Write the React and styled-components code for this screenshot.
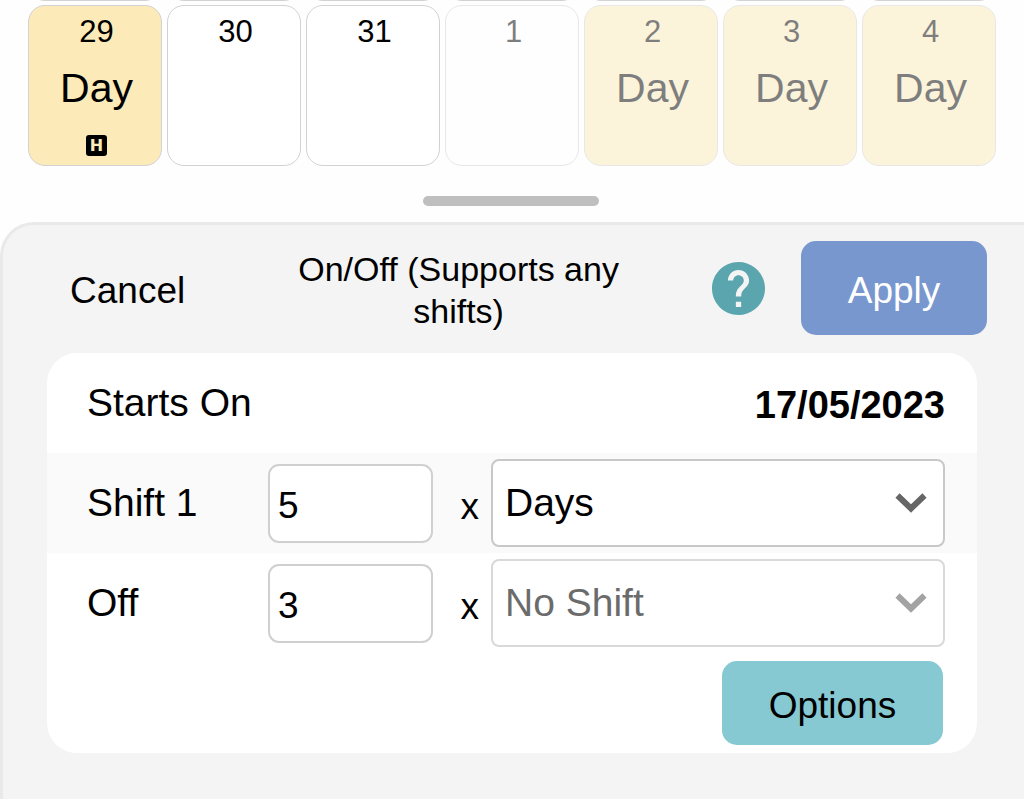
import React, { useState } from 'react'
import styled, { createGlobalStyle } from 'styled-components'
import { MdHelp } from 'react-icons/md'

const days = [
  { date: 29, shift: 'Day', holiday: true },
  { date: 30 },
  { date: 31 },
  { date: 1, next: true },
  { date: 2, shift: 'Day', next: true },
  { date: 3, shift: 'Day', next: true },
  { date: 4, shift: 'Day', next: true },
]

function Chevron() {
  return (
    <ChevronIcon viewBox="0 0 32 20" aria-hidden="true">
      <path d="M2.5 2.5 16 15.5 29.5 2.5" />
    </ChevronIcon>
  )
}

function App() {
  const [shiftDays, setShiftDays] = useState('5')
  const [offDays, setOffDays] = useState('3')

  return (
    <Page>
      <GlobalStyle />
      <Calendar>
        <Week aria-hidden="true">
          {days.map((day) => <DayCell key={day.date} />)}
        </Week>
        <Week>
          {days.map((day) => (
            <DayCell key={day.date} $shift={day.shift} $next={day.next}>
              <DateNumber>{day.date}</DateNumber>
              {day.shift && <ShiftName>{day.shift}</ShiftName>}
              {day.holiday && <Holiday>H</Holiday>}
            </DayCell>
          ))}
        </Week>
      </Calendar>
      <HandleBar>
        <Handle />
      </HandleBar>
      <Panel>
        <Header>
          <CancelButton type="button">Cancel</CancelButton>
          <Title>On/Off (Supports any shifts)</Title>
          <HelpButton type="button" aria-label="Help">
            <MdHelp viewBox="2 2 20 20" size={53} />
          </HelpButton>
          <ApplyButton type="button">Apply</ApplyButton>
        </Header>
        <Card>
          <StartRow>
            <Name>Starts On</Name>
            <StartDate>17/05/2023</StartDate>
          </StartRow>
          <ShiftRow $striped>
            <Label htmlFor="shift-days">Shift 1</Label>
            <CountInput id="shift-days" value={shiftDays} onChange={(e) => setShiftDays(e.target.value)} />
            <Times>x</Times>
            <SelectBox>
              <Select aria-label="Shift 1 type" defaultValue="Days">
                <option>Days</option>
              </Select>
              <Chevron />
            </SelectBox>
          </ShiftRow>
          <ShiftRow>
            <Label htmlFor="off-days">Off</Label>
            <CountInput id="off-days" value={offDays} onChange={(e) => setOffDays(e.target.value)} />
            <Times>x</Times>
            <SelectBox $disabled>
              <Select aria-label="Off type" defaultValue="No Shift" disabled>
                <option>No Shift</option>
              </Select>
              <Chevron />
            </SelectBox>
          </ShiftRow>
          <OptionsRow>
            <OptionsButton type="button">Options</OptionsButton>
          </OptionsRow>
        </Card>
      </Panel>
    </Page>
  )
}

export default App


const GlobalStyle = createGlobalStyle`
  * {
    box-sizing: border-box;
  }
  body {
    margin: 0;
    background: #fefefe;
    color: #000;
    font-family: "Liberation Sans", Arial, sans-serif;
  }
  button, input, select {
    font-family: inherit;
    color: inherit;
  }
  button {
    border: none;
    padding: 0;
    background: none;
    cursor: pointer;
  }
`
const Page = styled.main`
  display: flex;
  flex-direction: column;
  min-height: 100vh;
`
/* only the bottom edge of the previous week stays in view */
const Calendar = styled.section`
  display: flex;
  flex-direction: column;
  justify-content: flex-end;
  gap: 4px;
  height: 166px;
  padding: 0 28px;
  overflow: hidden;
`
const Week = styled.div`
  display: grid;
  grid-template-columns: repeat(7, 1fr);
  grid-auto-rows: 161px;
  flex-shrink: 0;
  gap: 5px;
`
const DayCell = styled.div`
  display: flex;
  flex-direction: column;
  align-items: center;
  padding: 8px 0 0 3px;
  border: 1px solid #d2d2d2;
  border-radius: 17px;
  background: ${(p) => (p.$shift ? '#fcebb8' : '#fff')};
  opacity: ${(p) => (p.$next ? 0.5 : 1)};
`
const DateNumber = styled.span`
  font-size: 31px;
  line-height: 36px;
`
const ShiftName = styled.span`
  margin-top: 14px;
  font-size: 41px;
  line-height: 48px;
`
const Holiday = styled.span`
  width: 21px;
  height: 21px;
  margin-top: 23px;
  border-radius: 3px;
  background: #000;
  color: #fcebb8;
  font: bold 16px/21px "DejaVu Sans", sans-serif;
  text-align: center;
`
const HandleBar = styled.div`
  display: flex;
  justify-content: center;
  padding: 30px 3px 16px 0;
`
const Handle = styled.div`
  width: 176px;
  height: 10px;
  border-radius: 5px;
  background: #bfbfbf;
`
const Panel = styled.section`
  flex: 1;
  padding: 16px 47px 47px 44px;
  border-top: 3px solid #e9e9e9;
  border-left: 3px solid #e9e9e9;
  border-top-left-radius: 34px;
  background: #f4f4f4;
`
const Header = styled.header`
  display: flex;
  align-items: center;
  margin: 0 -10px 18px 23px;
`
const CancelButton = styled.button`
  padding-top: 5px;
  font-size: 37px;
  line-height: 42px;
`
const Title = styled.h1`
  flex: 1;
  margin: 0;
  padding: 4px 80px 0 100px;
  font-size: 34px;
  font-weight: 400;
  line-height: 42px;
  text-align: center;
`
const HelpButton = styled.button`
  display: flex;
  margin-right: 36px;
  color: #5ba5ae;
`
const ApplyButton = styled.button`
  width: 186px;
  height: 94px;
  padding-top: 5px;
  border-radius: 15px;
  background: #7997cf;
  color: #fff;
  font-size: 37px;
`
const Card = styled.div`
  border-radius: 30px;
  background: #fff;
  overflow: hidden;
`
const StartRow = styled.div`
  display: flex;
  align-items: center;
  justify-content: space-between;
  height: 100px;
  padding: 0 32px 0 40px;
`
const Name = styled.span`
  font-size: 39px;
`
const StartDate = styled.time`
  padding-top: 4px;
  font-size: 38px;
  font-weight: 700;
`
const ShiftRow = styled.div`
  display: grid;
  grid-template-columns: 181px 165px 58px 1fr;
  align-items: center;
  height: 100px;
  padding: 0 32px 0 40px;
  background: ${(p) => (p.$striped ? '#fafafa' : '#fff')};
`
const Label = styled.label`
  font-size: 39px;
`
const CountInput = styled.input`
  width: 100%;
  height: 79px;
  padding: 5px 8px 0;
  border: 2px solid #d0d0d0;
  border-radius: 11px;
  background: #fff;
  font-size: 37px;
`
const Times = styled.span`
  padding: 8px 12px 0 0;
  font-size: 37px;
  text-align: right;
`
const SelectBox = styled.div`
  position: relative;
  color: ${(p) => (p.$disabled ? '#6b6b6b' : '#000')};

  svg {
    stroke: ${(p) => (p.$disabled ? '#a3a3a3' : '#666')};
  }
  select {
    border-color: ${(p) => (p.$disabled ? '#d9d9d9' : '#c8c8c8')};
  }
`
const Select = styled.select`
  display: block;
  width: 100%;
  height: 88px;
  padding: 0 60px 2px 12px;
  border: 2px solid;
  border-radius: 8px;
  background: #fff;
  font-size: 39px;
  opacity: 1;
  appearance: none;
`
const ChevronIcon = styled.svg`
  position: absolute;
  top: 34px;
  right: 18px;
  width: 32px;
  height: 20px;
  fill: none;
  stroke-width: 6;
  pointer-events: none;
`
const OptionsRow = styled.div`
  display: flex;
  justify-content: flex-end;
  padding: 8px 34px;
`
const OptionsButton = styled.button`
  width: 221px;
  height: 84px;
  padding-top: 5px;
  border-radius: 15px;
  background: #87c9d2;
  font-size: 37px;
`
